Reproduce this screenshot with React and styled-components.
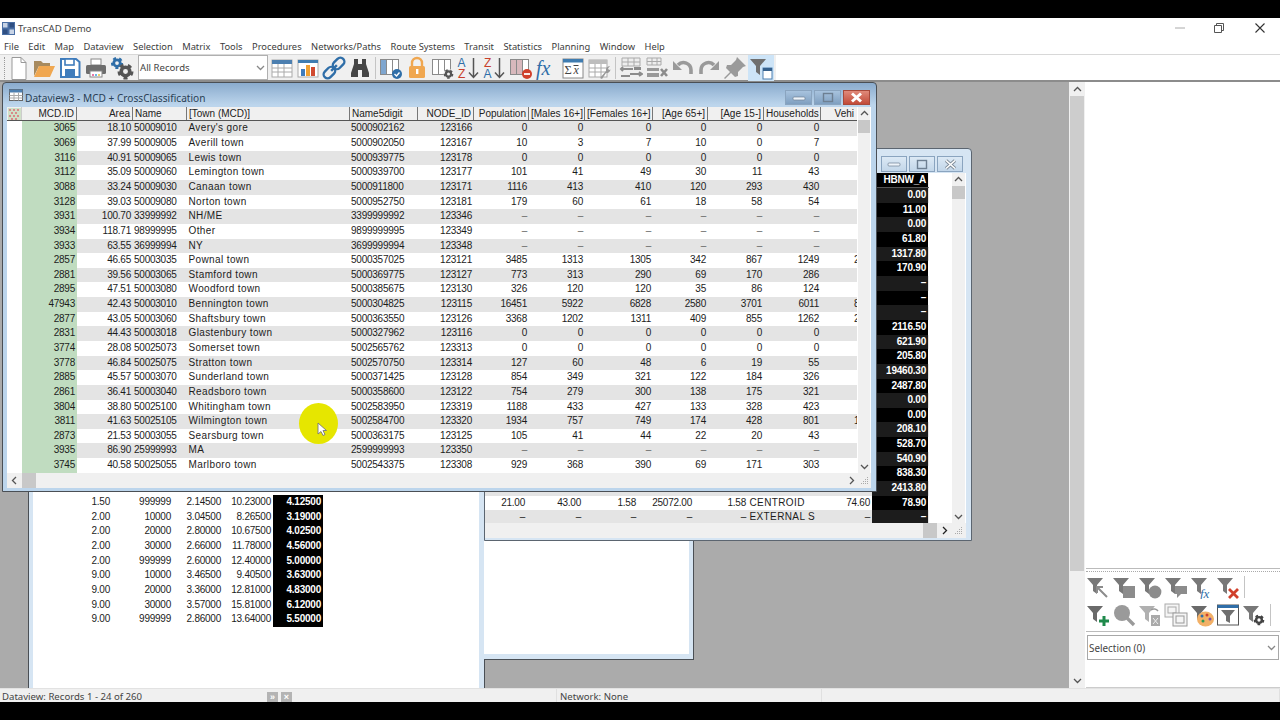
import React from "react";
import styled, { createGlobalStyle } from "styled-components";

const Global = createGlobalStyle`
  html, body { margin: 0; padding: 0; background: #000; }
  body { width: 1280px; height: 720px; overflow: hidden; }
  #root { width: 1280px; height: 720px; }
  * { box-sizing: border-box; }
`;

const UI = `"Noto Sans", "Open Sans", sans-serif`;
const GRID = `"Liberation Sans", Arial, sans-serif`;

const Page = styled.div`display:flex;flex-direction:column;width:1280px;height:720px;background:#fff;`;
const BlackBar = styled.div`height:${p => p.$h}px;background:#000;flex:none;`;

const TitleBar = styled.div`display:flex;align-items:center;height:20px;background:#fff;padding-left:2px;flex:none;color:#444;font:9.6px ${UI};`;
const AppName = styled.span`margin-left:3px;flex:1;`;
const Caption = styled.div`display:flex;align-items:center;justify-content:center;width:${p => p.$w}px;`;

const MenuBar = styled.div`display:flex;height:17px;align-items:center;padding-left:4px;gap:9.45px;flex:none;border-bottom:1px solid #d8d8d8;color:#3c3c3c;font:9.34px ${UI};`;
const ToolStrip = styled.div`display:flex;height:27px;flex:none;background:#fff;border-bottom:2px solid #8c8c8c;`;
const ToolGroup = styled.div`display:flex;align-items:center;background:#f0f0f0;width:776px;padding-left:5px;`;
const Grip = styled.div`width:1px;height:22px;border-left:1px dotted #999;margin-left:-1px;`;
const Slot = styled.div`width:26px;height:26px;display:flex;align-items:center;justify-content:center;flex:none;background:${p => p.$on ? "#cde4f7" : "transparent"};`;
const Sep = styled.div`width:${p => p.$w}px;height:22px;flex:none;display:flex;justify-content:center;&::after{content:"";width:1px;background:#c4c4c4;}`;
const Combo = styled.div`width:130px;height:25px;flex:none;margin:0 1px 0 3px;background:#fff;border:1px solid #b0b0b0;display:flex;align-items:center;justify-content:space-between;padding:0 2px 0 1px;font:9.6px ${UI};color:#444;`;

const Workspace = styled.div`flex:1;display:flex;min-height:0;`;
const Mdi = styled.div`position:relative;width:1069px;background:#ababab;overflow:hidden;flex:none;`;
const SideScroll = styled.div`width:16px;flex:none;background:#f0f0f0;display:flex;flex-direction:column;align-items:center;padding:0 1px;`;
const Arrow = styled.div`height:${p => p.$h || 13}px;width:100%;display:flex;align-items:center;justify-content:center;flex:none;`;
const SideThumb = styled.div`width:100%;height:475px;background:#cdcdcd;flex:none;`;
const Fill = styled.div`flex:1;`;

const Panel = styled.div`flex:1;display:flex;flex-direction:column;background:#fff;`;
const Dock = styled.div`flex:none;height:120px;margin-left:1px;border-top:1px solid #bbb;border-bottom:1px solid #ccc;padding-top:2px;display:flex;flex-direction:column;`;
const Dotted = styled.div`border-top:1px dotted #aaa;height:1px;margin-bottom:1px;flex:none;`;
const PanelRow = styled.div`display:flex;align-items:center;height:${p => p.$h}px;flex:none;margin-left:-1px;`;
const DockRule = styled.div`border-top:1px solid #bbb;height:1px;margin-top:2px;flex:none;`;
const PanelCombo = styled(Combo)`width:192px;height:25px;margin:3px 0 0 1px;font-size:9.9px;border-color:#a8a8a8;color:#444;`;

const Status = styled.div`height:14px;flex:none;background:#f0f0f0;display:flex;overflow:hidden;border-top:1px solid #e2e2e2;color:#444;font:9.6px/13px ${UI};`;
const StatusCell = styled.div`width:${p => p.$w}px;flex:${p => p.$w ? "none" : 1};padding:1px 0 0 ${p => p.$pad || 0}px;display:flex;align-items:flex-start;border-right:1px solid #e0e0e0;`;
const StatusText = styled.span`width:265px;flex:none;`;
const StatusBtn = styled.div`width:11px;height:11px;margin:2px 3px 0 0;background:#b4b4b4;color:#fff;font:bold 9px/10px ${GRID};text-align:center;`;

const Win = styled.div`position:absolute;left:${p => p.$x}px;top:${p => p.$y}px;width:${p => p.$w}px;height:${p => p.$h}px;z-index:${p => p.$z};`;
const MainFrame = styled(Win)`
  border:1px solid #4a4f55;border-radius:4px 4px 0 0;
  background:linear-gradient(#8aabcd 0,#bcd5ec 22px,#bcd5ec 100%);
  padding:0 5px 3px 4px;display:flex;flex-direction:column;
`;
const GhostFrame = styled(Win)`
  border:1px solid #5b6570;border-radius:4px 4px 0 0;background:#d6e5f3;
  padding:0 5px 2px 0;display:flex;flex-direction:column;
`;
const Caption2 = styled.div`height:${p => p.$h}px;flex:none;display:flex;align-items:center;color:#2a3f55;font:10.15px ${UI};padding-left:2px;`;
const CapTitle = styled.span`flex:1;margin-left:2px;margin-top:5px;`;
const WinBtns = styled.div`display:flex;gap:2px;align-self:flex-start;margin-top:${p => p.$t}px;margin-right:${p => p.$r}px;`;
const WinBtn = styled.div`
  width:${p => p.$w || 27}px;height:${p => p.$hh || 15}px;display:flex;align-items:center;justify-content:center;
  border:1px solid ${p => p.$close ? "#a8493a" : "#8aa4bf"};
  background:${p => p.$close ? "linear-gradient(#e08a7a,#c24a38)" : p.$soft ? "linear-gradient(#dce9f5,#c2d6e9)" : "linear-gradient(#a8c3de,#7f9fc0)"};
`;

const Body = styled.div`flex:1;display:flex;min-height:0;background:#fff;`;
const Table = styled.div`overflow:hidden;width:${p => p.$w}px;flex:none;font:10px/14.65px ${GRID};color:#1c1c1c;`;
const HeadRow = styled.div`display:grid;grid-template-columns:${p => p.$cols};height:${p => p.$h}px;background:#f0f0f0;border-bottom:1px solid #555;line-height:13px;`;
const HeadCell = styled.div`
  text-align:${p => p.$left ? "left" : "right"};padding:0 2px;white-space:nowrap;overflow:hidden;
  border-right:1px solid ${p => p.$plain ? "transparent" : "#777"};color:#222;
`;
const HandleHead = styled.div`display:flex;align-items:center;justify-content:center;border-right:1px solid #ccc;`;
const Row = styled.div`display:grid;grid-template-columns:${p => p.$cols};height:14.65px;background:${p => p.$odd ? "#fff" : "#e4e4e4"};`;
const Cell = styled.div`
  text-align:${p => p.$left ? "left" : "right"};padding:0 ${p => p.$left ? "0 0 1.5px" : "2px 0 0"};white-space:nowrap;overflow:hidden;
  letter-spacing:${p => p.$left ? "0.38px" : "-0.24px"};
`;
const CodeCell = styled(Cell)`padding-left:1px;letter-spacing:-0.24px;`;
const ClippedCell = styled(Cell)`padding-left:33px;`;
const Handle = styled.div`background:#fff;`;
const Green = styled(Cell)`background:#c0dcc0;`;
const Dark = styled(Cell)`background:${p => p.$odd ? "#000" : "#1c1c1c"};color:#fff;font-weight:bold;letter-spacing:-0.22px;`;
const Null = styled.span`color:#666;`;

const VBar = styled.div`width:${p => p.$w}px;flex:none;margin-left:${p => p.$m}px;background:#f0f0f0;display:flex;flex-direction:column;align-items:center;`;
const VThumb = styled.div`width:100%;height:13px;background:#c8c8c8;flex:none;`;
const HBar = styled.div`height:${p => p.$h}px;flex:none;background:#f0f0f0;display:flex;align-items:center;`;
const HThumb = styled.div`width:14px;height:100%;background:#c8c8c8;flex:none;`;
const HSide = styled.div`width:${p => p.$w}px;height:100%;flex:none;display:flex;align-items:center;justify-content:center;`;

const Sheet = styled(Win)`background:#fff;border-left:1px solid #4a4f55;border-right:1px solid #4a4f55;padding:${p => p.$pt}px 0 0 4px;box-shadow:inset 4px 0 0 #d6e5f3,inset -5px 0 0 #d6e5f3;`;
const SheetTable = styled.div`font:10px/14.65px ${GRID};color:#1c1c1c;`;
const SheetRow = styled.div`display:grid;grid-template-columns:79px 61px 50px 50px 50px;height:14.65px;`;
const Blank = styled(Win)`background:#fff;border:1px solid #4a4f55;border-top:0;border-left:0;box-shadow:inset -4px -5px 0 #d6e5f3;`;

const Spot = styled.div`position:absolute;left:299px;top:321px;width:39px;height:41px;border-radius:50%;background:#e6e600;z-index:9;display:flex;align-items:flex-start;justify-content:center;padding:19px 0 0 7px;`;

const Ic = ({ children, s = 24 }) => <svg width={s} height={s} viewBox="0 0 24 24">{children}</svg>;

const Chev = ({ d = "up", c = "#555" }) => {
  const r = { up: 0, right: 90, down: 180, left: 270 }[d];
  return <svg width="9" height="9" viewBox="0 0 9 9"><path d="M1 6l3.5-3.5L8 6" fill="none" stroke={c} strokeWidth="1.3" transform={`rotate(${r} 4.5 4.5)`} /></svg>;
};
const SizeGrip = () => <svg width="9" height="9" viewBox="0 0 9 9"><path d="M7 1h1v1H7zM5 3h1v1H5zM7 3h1v1H7zM3 5h1v1H3zM5 5h1v1H5zM7 5h1v1H7zM1 7h1v1H1zM3 7h1v1H3zM5 7h1v1H5zM7 7h1v1H7z" fill="#aaa" /></svg>;

const Gear = ({ x, y, r, c }) => (
  <g>
    <circle cx={x} cy={y} r={r * 0.65} fill="none" stroke={c} strokeWidth={r * 0.55} />
    <circle cx={x} cy={y} r={r} fill="none" stroke={c} strokeWidth={r * 0.42} strokeDasharray={`${r * 0.6} ${r * 0.66}`} />
  </g>
);
const Cols = ({ a = "#7fa6cf", b = "#fff", x = "#8a8a8a" }) => (
  <g>
    <rect x="1.5" y="3.5" width="6" height="15" fill={a} stroke={x} />
    <rect x="7.5" y="3.5" width="6" height="15" fill={b} stroke={x} />
    <rect x="13.5" y="3.5" width="6" height="15" fill="#fff" stroke={x} />
  </g>
);
const GridIcon = ({ c = "#aaa", top = "#4c7fb0", w = 20 }) => (
  <g>
    <rect x="2" y="4" width={w} height="17" fill="#fff" stroke={c} />
    <rect x="2" y="4" width={w} height="4" fill={top} />
    <path d={`M2 12h${w}M2 16h${w}M8 8v13M14 8v13`} stroke={c} fill="none" />
  </g>
);
const Fun = ({ c = "#787878" }) => <path d="M1 3h16l-6 7v9l-4-3v-6z" fill={c} />;

const icons = {
  doc: <Ic><path d="M6 1.5h9l5 5v17H6z" fill="#fff" stroke="#999" /><path d="M15 1.5v5h5" fill="none" stroke="#999" /></Ic>,
  folder: <Ic><path d="M2 5h7l2 2h7v3H7L2 20z" fill="#a78a5e" /><path d="M7 10h16l-5 11H2z" fill="#f0a750" /></Ic>,
  save: <Ic><path d="M3 3h15l3.5 3v15H3z" fill="#fff" stroke="#3f7cbc" strokeWidth="2" /><rect x="7" y="3" width="9" height="6" fill="#fff" stroke="#3f7cbc" strokeWidth="1.6" /><rect x="7" y="13" width="10" height="8" fill="#3f7cbc" /></Ic>,
  print: <Ic><rect x="7" y="3" width="10" height="6" fill="#fff" stroke="#888" /><rect x="2" y="9" width="20" height="9" rx="1.5" fill="#6d6d6d" /><rect x="6" y="15" width="12" height="6" fill="#fff" stroke="#888" /><path d="M8 19h2" stroke="#e24c8c" strokeWidth="1.6" /><path d="M11 19h2" stroke="#3da0d8" strokeWidth="1.6" /><path d="M14 19h2" stroke="#e8c23a" strokeWidth="1.6" /></Ic>,
  gear: <Ic><Gear x={7} y={7} r={5} c="#2f6ea8" /><Gear x={15.5} y={15.5} r={6.6} c="#555" /></Ic>,
  table: <Ic><GridIcon /></Ic>,
  chart: <Ic><rect x="2" y="4" width="20" height="17" fill="#fff" stroke="#aaa" /><rect x="2" y="4" width="20" height="3" fill="#3f7cb0" /><rect x="5" y="13" width="4" height="7" fill="#3f7cbc" /><rect x="10" y="9" width="4" height="11" fill="#f0a030" /><rect x="15" y="11" width="4" height="9" fill="#d04a30" /></Ic>,
  link: <Ic><g transform="rotate(-45 12 12)" fill="none" stroke="#2f6ea8" strokeWidth="2.4"><rect x="-1" y="8" width="13" height="8" rx="4" /><rect x="12" y="8" width="13" height="8" rx="4" /><path d="M8 12h8" /></g></Ic>,
  bino: <Ic><path d="M6 3h4v5h4V3h4v5l3 9v4h-7v-7h-4v7H3v-4l3-9z" fill="#454545" /></Ic>,
  colCheck: <Ic><Cols /><circle cx="18" cy="18" r="5" fill="#2f6ea8" /><path d="M15.5 18l2 2 3-3.5" fill="none" stroke="#fff" strokeWidth="1.4" /></Ic>,
  lock: <Ic><path d="M7 11V7a5 5 0 0 1 10 0v4" fill="none" stroke="#f0a750" strokeWidth="2.4" /><rect x="4" y="10" width="16" height="12" rx="1.5" fill="#f0a750" /><rect x="11" y="13" width="2.4" height="5" fill="#fff" /></Ic>,
  colGear: <Ic><Cols a="#fff" /><circle cx="17.5" cy="18" r="5" fill="#f0f0f0" /><Gear x={17.5} y={18} r={4} c="#555" /></Ic>,
  az: <Ic><text x="0.5" y="10.5" fontFamily={GRID} fontSize="12" fill="#2f6ea8">A</text><text x="1" y="21.5" fontFamily={GRID} fontSize="12" fill="#c8402c">Z</text><path d="M16.5 2v19M12 16.5l4.5 5 4.5-5" fill="none" stroke="#555" strokeWidth="1.5" /></Ic>,
  za: <Ic><text x="1" y="10.5" fontFamily={GRID} fontSize="12" fill="#c8402c">Z</text><text x="0.5" y="21.5" fontFamily={GRID} fontSize="12" fill="#2f6ea8">A</text><path d="M16.5 2v19M12 16.5l4.5 5 4.5-5" fill="none" stroke="#555" strokeWidth="1.5" /></Ic>,
  colMinus: <Ic><Cols a="#d8b8bc" b="#d8b8bc" /><circle cx="18" cy="18" r="5" fill="#d0402c" /><path d="M15 18h6" stroke="#fff" strokeWidth="1.8" /></Ic>,
  fx: <Ic><text x="1" y="19" fontFamily='"Liberation Serif", serif' fontStyle="italic" fontSize="20" fill="#2f6ea8">fx</text></Ic>,
  sigma: <Ic><rect x="2" y="3" width="20" height="19" fill="#fff" stroke="#888" /><rect x="2" y="3" width="20" height="3.5" fill="#3f7cb0" /><text x="3.5" y="18" fontFamily='"Liberation Serif", serif' fontSize="12.5" fill="#444">Σ</text><text x="12.5" y="18" fontFamily='"Liberation Serif", serif' fontStyle="italic" fontSize="12" fill="#444">x</text><path d="M12.5 9.5h5" stroke="#444" /></Ic>,
  tblWrench: <Ic><GridIcon top="#bdbdbd" w={18} /><path d="M13 22l6-7a4 4 0 0 1 4-5l-2 2.5 1 1.5 1.5-.5a4 4 0 0 1-4.5 3.5L15 23z" fill="#999" /></Ic>,
  moveA: <Ic><path d="M3 2h18v8H3zM3 6h18M9 2v8M15 2v8" fill="#eee" stroke="#aaa" /><path d="M2 13h12M4 11l-2 2 2 2M11 18h12M20 16l3 2-3 2M2 20h9" stroke="#8c8c8c" strokeWidth="2" fill="none" /><rect x="15" y="11" width="7" height="3" fill="#8c8c8c" /></Ic>,
  moveB: <Ic><path d="M2 2h14v7H2zM2 5.5h14M7 2v7M12 2v7" fill="#eee" stroke="#aaa" /><rect x="2" y="12" width="12" height="3" fill="#999" /><rect x="2" y="17" width="12" height="4" fill="#999" /><path d="M16 13l6 7M22 13l-6 7" stroke="#8c8c8c" strokeWidth="2.6" /></Ic>,
  undo: <Ic><path d="M7 9a7.5 7.5 0 0 1 13 5v4" fill="none" stroke="#9a9a9a" strokeWidth="3.6" /><path d="M2 5v9h9z" fill="#9a9a9a" /></Ic>,
  redo: <Ic><path d="M17 9a7.5 7.5 0 0 0-13 5v4" fill="none" stroke="#9a9a9a" strokeWidth="3.6" /><path d="M22 5v9h-9z" fill="#9a9a9a" /></Ic>,
  pin: <Ic><path d="M14 1l9 9-3 1-5 5v4l-3 1-4-4-6 6-1-1 6-6-4-4 1-3h4l5-5z" fill="#9a9a9a" /></Ic>,
  filterOn: <Ic><Fun c="#6f6f6f" /><rect x="14" y="12" width="9" height="11" fill="#fff" stroke="#4c7fb0" /><rect x="14" y="12" width="9" height="3" fill="#35608c" /></Ic>,
  fArrow: <Ic><Fun /><path d="M21 22L11 12M11 18v-6h6" fill="none" stroke="#8c8c8c" strokeWidth="2" /></Ic>,
  fSquare: <Ic><Fun /><rect x="11" y="11" width="12" height="12" fill="#8c8c8c" /></Ic>,
  fCircle: <Ic><Fun /><circle cx="17" cy="17" r="6.4" fill="#8c8c8c" /></Ic>,
  fShape: <Ic><Fun /><path d="M11 11h12v8h-6l-4 4v-4h-2z" fill="#8c8c8c" /></Ic>,
  fFx: <Ic><Fun /><text x="10" y="22.5" fontFamily='"Liberation Serif", serif' fontStyle="italic" fontSize="13" fill="#2f6ea8">fx</text></Ic>,
  fX: <Ic><Fun /><path d="M13 14l9 9M22 14l-9 9" stroke="#d0402c" strokeWidth="2.8" /></Ic>,
  fPlus: <Ic><Fun c="#6a6a6a" /><path d="M18 13v10M13 18h10" stroke="#1f8a4c" strokeWidth="3" /></Ic>,
  search: <Ic><circle cx="10" cy="10" r="8" fill="#9a9a9a" /><path d="M15 15l7 7" stroke="#9a9a9a" strokeWidth="3.4" /></Ic>,
  fDoc: <Ic><Fun c="#b0b0b0" /><path d="M13 7a5 5 0 0 1 7 1" stroke="#999" fill="none" strokeWidth="1.5" /><rect x="13" y="12" width="9" height="11" fill="#aaa" /><path d="M15 15l5 6M20 15l-5 6" stroke="#eee" /></Ic>,
  fOverlap: <Ic><rect x="1" y="1" width="14" height="13" fill="#f5f5f5" stroke="#aaa" /><rect x="4" y="4" width="8" height="6" fill="none" stroke="#aaa" /><rect x="9" y="10" width="14" height="13" fill="#f5f5f5" stroke="#999" /><rect x="12" y="13" width="8" height="7" fill="none" stroke="#999" /></Ic>,
  fPalette: <Ic><Fun c="#6a6a6a" /><ellipse cx="15.5" cy="16" rx="8.5" ry="7.5" fill="#f2b066" /><circle cx="12" cy="13" r="1.5" fill="#2f6ea8" /><circle cx="17" cy="12" r="1.5" fill="#d0402c" /><circle cx="20" cy="16" r="1.5" fill="#7a4fa8" /><circle cx="13" cy="18" r="1.5" fill="#2f9a50" /></Ic>,
  fFrame: <Ic><rect x="1.5" y="2" width="21" height="20" fill="#fff" stroke="#555" /><rect x="1.5" y="2" width="21" height="3" fill="#2f6ea8" /><path d="M5 7h14l-5 6v7l-4-2v-5z" fill="#6f6f6f" /></Ic>,
  fGear: <Ic><Fun /><Gear x={17} y={17} r={4.4} c="#444" /></Ic>,
};

const Wrap = ({ n, on }) => <Slot $on={on}>{icons[n]}</Slot>;

const mainCols = "15px 55px 56px 54px 163px 68px 56px 55px 56px 68px 55px 56px 57px 36px";
const ghostCols = "42px 56px 55px 56px 54px 69px 55px 56px";

const N = null;
const rows = [
  ["3065","18.10","50009010","Avery's gore","5000902162","123166",0,0,0,0,0,0],
  ["3069","37.99","50009005","Averill town","5000902050","123167",10,3,7,10,0,7],
  ["3116","40.91","50009065","Lewis town","5000939775","123178",0,0,0,0,0,0],
  ["3112","35.09","50009060","Lemington town","5000939700","123177",101,41,49,30,11,43],
  ["3088","33.24","50009030","Canaan town","5000911800","123171",1116,413,410,120,293,430],
  ["3128","39.03","50009080","Norton town","5000952750","123181",179,60,61,18,58,54],
  ["3931","100.70","33999992","NH/ME","3399999992","123346",N,N,N,N,N,N],
  ["3934","118.71","98999995","Other","9899999995","123349",N,N,N,N,N,N],
  ["3933","63.55","36999994","NY","3699999994","123348",N,N,N,N,N,N],
  ["2857","46.65","50003035","Pownal town","5000357025","123121",3485,1313,1305,342,867,1249,"2"],
  ["2881","39.56","50003065","Stamford town","5000369775","123127",773,313,290,69,170,286],
  ["2895","47.51","50003080","Woodford town","5000385675","123130",326,120,120,35,86,124],
  ["47943","42.43","50003010","Bennington town","5000304825","123115",16451,5922,6828,2580,3701,6011,"8"],
  ["2877","43.05","50003060","Shaftsbury town","5000363550","123126",3368,1202,1311,409,855,1262,"2"],
  ["2831","44.43","50003018","Glastenbury town","5000327962","123116",0,0,0,0,0,0],
  ["3774","28.08","50025073","Somerset town","5002565762","123313",0,0,0,0,0,0],
  ["3778","46.84","50025075","Stratton town","5002570750","123314",127,60,48,6,19,55],
  ["2885","45.57","50003070","Sunderland town","5000371425","123128",854,349,321,122,184,326],
  ["2861","36.41","50003040","Readsboro town","5000358600","123122",754,279,300,138,175,321],
  ["3804","38.80","50025100","Whitingham town","5002583950","123319",1188,433,427,133,328,423],
  ["3811","41.63","50025105","Wilmington town","5002584700","123320",1934,757,749,174,428,801,"1"],
  ["2873","21.53","50003055","Searsburg town","5000363175","123125",105,41,44,22,20,43],
  ["3935","86.90","25999993","MA","2599999993","123350",N,N,N,N,N,N],
  ["3745","40.58","50025055","Marlboro town","5002543375","123308",929,368,390,69,171,303],
];
const ghost = ["0.00","11.00","0.00","61.80","1317.80","170.90","–","–","–","2116.50","621.90","205.80","19460.30","2487.80","0.00","0.00","208.10","528.70","540.90","838.30","2413.80","78.90","–"];
const ghostLow = {
  21: ["21.00","43.00","1.58","25072.00","1.58","CENTROID","74.60"],
  22: ["–","–","–","–","–","EXTERNAL S","–"],
};
const sheet = [
  ["1.50","999999","2.14500","10.23000","4.12500"],
  ["2.00","10000","3.04500","8.26500","3.19000"],
  ["2.00","20000","2.80000","10.67500","4.02500"],
  ["2.00","30000","2.66000","11.78000","4.56000"],
  ["2.00","999999","2.60000","12.40000","5.00000"],
  ["9.00","10000","3.46500","9.40500","3.63000"],
  ["9.00","20000","3.36000","12.81000","4.83000"],
  ["9.00","30000","3.57000","15.81000","6.12000"],
  ["9.00","999999","2.86000","13.64000","5.50000"],
];
const heads = [["MCD.ID"],["Area"],["Name",1],["[Town (MCD)]",1],["Name5digit",1],["NODE_ID"],["Population"],["[Males 16+]"],["[Females 16+]"],["[Age 65+]"],["[Age 15-]"],["Households"],["Vehi"]];
const menu = ["File","Edit","Map","Dataview","Selection","Matrix","Tools","Procedures","Networks/Paths","Route Systems","Transit","Statistics","Planning","Window","Help"];
const strip1 = ["doc","folder","save","print","gear"];
const strip2 = ["table","chart","link","bino"];
const strip3 = ["colCheck","lock","colGear","az","za","colMinus","fx","sigma","tblWrench"];
const strip4 = ["moveA","moveB","undo","redo","pin"];

const Btns = ({ soft, t, r, w, hh }) => (
  <WinBtns $t={t} $r={r}>
    <WinBtn $soft={soft} $w={w} $hh={hh}><svg width="14" height="8" viewBox="0 0 14 8"><rect x="1" y="3" width="12" height="3" rx="1" fill="#eef4fa" stroke="#6d7f92" strokeWidth=".7" /></svg></WinBtn>
    <WinBtn $soft={soft} $w={w} $hh={hh}><svg width="12" height="11" viewBox="0 0 12 11"><rect x="1.5" y="1.5" width="9" height="8" fill="none" stroke="#6d7f92" strokeWidth="1.4" /></svg></WinBtn>
    <WinBtn $soft={soft} $close={!soft} $w={w} $hh={hh}><svg width="13" height="11" viewBox="0 0 13 11"><path d="M2 1.5l9 8M11 1.5l-9 8" stroke={soft ? "#7f8c99" : "#fff"} strokeWidth={soft ? 3.4 : 3} />{soft && <path d="M2 1.5l9 8M11 1.5l-9 8" stroke="#fff" strokeWidth="1.6" />}</svg></WinBtn>
  </WinBtns>
);

export default function App() {
  return (
    <Page>
      <Global />
      <BlackBar $h={18} />
      <TitleBar>
        <svg width="13" height="13" viewBox="0 0 13 13"><rect width="13" height="13" fill="#4a6fa5" /><rect x="1" y="1" width="4.5" height="4.5" fill="#c8d4e6" /><rect x="7.5" y="1" width="4.5" height="4.5" fill="#2f4f82" /><rect x="1" y="7.5" width="4.5" height="4.5" fill="#2f4f82" /><rect x="7.5" y="7.5" width="4.5" height="4.5" fill="#c8d4e6" /></svg>
        <AppName>TransCAD Demo</AppName>
        <Caption $w={38}><svg width="12" height="10" viewBox="0 0 12 10"><path d="M1 5h10" stroke="#aaa" /></svg></Caption>
        <Caption $w={40}><svg width="12" height="12" viewBox="0 0 12 12"><path d="M1.5 3.5h7v7h-7zM3.5 3.5v-2h7v7h-2" fill="none" stroke="#555" /></svg></Caption>
        <Caption $w={41}><svg width="12" height="12" viewBox="0 0 12 12"><path d="M1.5 1.5l9 9M10.5 1.5l-9 9" stroke="#333" strokeWidth="1.1" /></svg></Caption>
      </TitleBar>
      <MenuBar>{menu.map(m => <span key={m}>{m}</span>)}</MenuBar>
      <ToolStrip>
        <ToolGroup>
          <Grip />
          {strip1.map(n => <Wrap key={n} n={n} />)}
          <Combo>All Records<Chev d="down" c="#888" /></Combo>
          {strip2.map(n => <Wrap key={n} n={n} />)}
          <Sep $w={5} />
          {strip3.map(n => <Wrap key={n} n={n} />)}
          <Sep $w={6} />
          {strip4.map(n => <Wrap key={n} n={n} />)}
          <Wrap n="filterOn" on />
        </ToolGroup>
      </ToolStrip>
      <Workspace>
        <Mdi>
          <Sheet $x={28} $y={0} $w={457} $h={606} $z={1} $pt={413.2}>
            <SheetTable>
              {sheet.map((r, i) => (
                <SheetRow key={i}>
                  {r.slice(0, 4).map((v, j) => <Cell key={j}>{v}</Cell>)}
                  <Dark $odd>{r[4]}</Dark>
                </SheetRow>
              ))}
            </SheetTable>
          </Sheet>
          <Blank $x={484} $y={0} $w={210} $h={578} $z={2} />
          <GhostFrame $x={484} $y={66} $w={488} $h={393} $z={3}>
            <Caption2 $h={24}><Fill /><Btns soft t={7} r={3} w={26} hh={16} /></Caption2>
            <Body>
              <Table $w={444}>
                <HeadRow $cols={ghostCols} $h={15.2}>
                  {ghostCols.split(" ").slice(1).map((_, i) => <HeadCell key={i} $plain />)}
                  <Dark $odd>HBNW_A</Dark>
                </HeadRow>
                {ghost.map((v, i) => (
                  <Row key={i} $cols={ghostCols} $odd={i % 2 === 1}>
                    {(ghostLow[i] || ["","","","","","",""]).map((c, j) =>
                      j === 5 ? <Cell key={j} $left>{c}</Cell> : <Cell key={j}>{c}</Cell>
                    )}
                    <Dark $odd={i % 2 === 1}>{v}</Dark>
                  </Row>
                ))}
              </Table>
              <VBar $w={13} $m={23}>
                <Arrow><Chev /></Arrow>
                <VThumb />
                <Fill />
                <Arrow><Chev d="down" /></Arrow>
              </VBar>
            </Body>
            <HBar $h={15}>
              <Fill />
              <HThumb />
              <HSide $w={14}><Chev d="right" c="#222" /></HSide>
              <HSide $w={15}><SizeGrip /></HSide>
            </HBar>
          </GhostFrame>
          <MainFrame $x={2} $y={0} $w={875} $h={410} $z={5}>
            <Caption2 $h={24}>
              <svg width="14" height="12" viewBox="0 0 14 12"><rect x=".5" y=".5" width="13" height="11" fill="#fff" stroke="#666" /><rect x=".5" y=".5" width="13" height="3" fill="#4c7fb0" /><path d="M.5 6.5h13M.5 9h13M5 3.5v8M9.5 3.5v8" stroke="#aaa" /></svg>
              <CapTitle>Dataview3 - MCD + CrossClassification</CapTitle>
              <Btns t={7} r={1} />
            </Caption2>
            <Body>
              <Table $w={850}>
                <HeadRow $cols={mainCols} $h={14.4}>
                  <HandleHead><svg width="13" height="12" viewBox="0 0 13 12"><rect width="13" height="12" fill="#cfe0c8" /><path d="M1 1h2v2H1zM5 1h2v2H5zM9 1h2v2H9zM3 4h2v2H3zM7 4h2v2H7zM1 7h2v2H1zM5 7h2v2H5zM9 7h2v2H9zM3 10h2v2H3zM7 10h2v2H7z" fill="#d88a8a" /></svg></HandleHead>
                  {heads.map(([h, l], i) => <HeadCell key={h} $left={l} $plain={i === 12}>{h}</HeadCell>)}
                </HeadRow>
                {rows.map((r, i) => (
                  <Row key={i} $cols={mainCols} $odd={i % 2 === 1}>
                    <Handle />
                    <Green>{r[0]}</Green>
                    <Cell>{r[1]}</Cell>
                    <CodeCell $left>{r[2]}</CodeCell>
                    <Cell $left>{r[3]}</Cell>
                    <CodeCell $left>{r[4]}</CodeCell>
                    <Cell>{r[5]}</Cell>
                    {r.slice(6, 12).map((v, j) => <Cell key={j}>{v === null ? <Null>–</Null> : v}</Cell>)}
                    <ClippedCell $left>{r[12] || ""}</ClippedCell>
                  </Row>
                ))}
              </Table>
              <VBar $w={12} $m={1}>
                <Arrow><Chev /></Arrow>
                <VThumb />
                <Fill />
                <Arrow><Chev d="down" /></Arrow>
              </VBar>
            </Body>
            <HBar $h={15}>
              <HSide $w={15}><Chev d="left" /></HSide>
              <HThumb />
              <Fill />
              <HSide $w={14}><Chev d="right" /></HSide>
              <HSide $w={13}><SizeGrip /></HSide>
            </HBar>
          </MainFrame>
          <Spot><svg width="10" height="14" viewBox="0 0 10 14"><path d="M1 1v11l3-2.5 2 4 2-1-2-4h3.5z" fill="#fff" stroke="#777" strokeWidth=".9" /></svg></Spot>
        </Mdi>
        <SideScroll>
          <Arrow $h={14}><Chev /></Arrow>
          <SideThumb />
          <Fill />
          <Arrow $h={15}><Chev d="down" /></Arrow>
        </SideScroll>
        <Panel>
          <Fill />
          <Dock>
            <Dotted />
            <PanelRow $h={28}>{["fArrow","fSquare","fCircle","fShape","fFx","fX"].map(n => <Wrap key={n} n={n} />)}<Sep $w={6} /></PanelRow>
            <PanelRow $h={28}>{["fPlus","search","fDoc","fOverlap","fPalette","fFrame","fGear"].map(n => <Wrap key={n} n={n} />)}<Sep $w={6} /></PanelRow>
            <DockRule />
            <PanelCombo>Selection (0)<Chev d="down" c="#888" /></PanelCombo>
          </Dock>
        </Panel>
      </Workspace>
      <Status>
        <StatusCell $w={557} $pad={2}>
          <StatusText>Dataview: Records 1 - 24 of 260</StatusText>
          <StatusBtn>»</StatusBtn>
          <StatusBtn>×</StatusBtn>
        </StatusCell>
        <StatusCell $w={265} $pad={3}>Network: None</StatusCell>
        <StatusCell />
      </Status>
      <BlackBar $h={18} />
    </Page>
  );
}
